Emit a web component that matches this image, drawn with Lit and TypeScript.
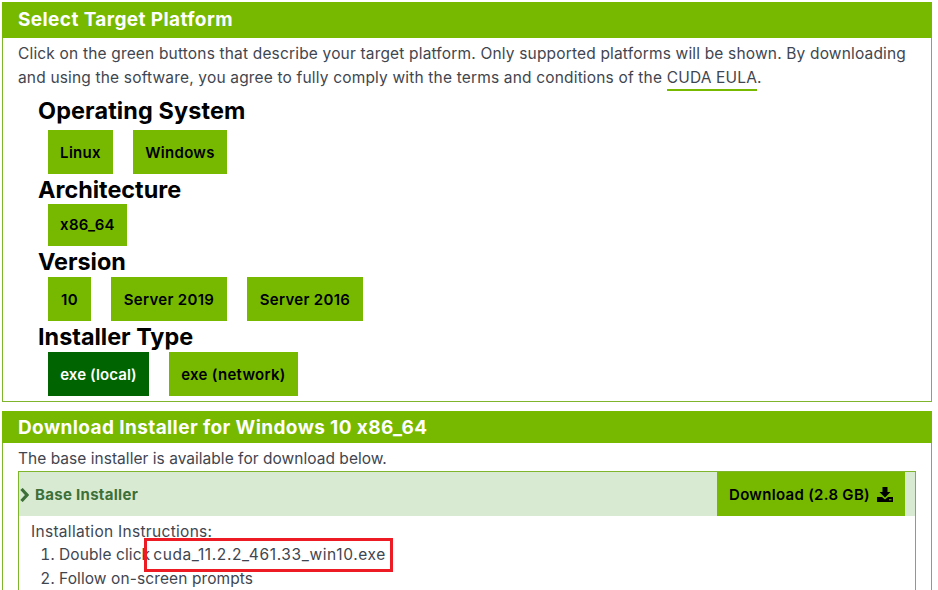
import { LitElement, html, css } from 'lit';
import { customElement } from 'lit/decorators.js';

const groups = [
  { title: 'Operating System', cls: 'os', active: '', options: [{ label: 'Linux', w: 65 }, { label: 'Windows', w: 94 }] },
  { title: 'Architecture', cls: 'arch', active: '', options: [{ label: 'x86_64', w: 79 }] },
  { title: 'Version', cls: 'ver', active: '', options: [{ label: '10', w: 43 }, { label: 'Server 2019', w: 116 }, { label: 'Server 2016', w: 116 }] },
  { title: 'Installer Type', cls: 'inst', active: 'exe (local)', options: [{ label: 'exe (local)', w: 101 }, { label: 'exe (network)', w: 129 }] },
];

@customElement('app-root')
export class AppRoot extends LitElement {
  static styles = css`
    :host {
      display: block;
      width: 938px;
      height: 590px;
      overflow: hidden;
      box-sizing: border-box;
      padding: 2px 6px 0 2px;
      background: #fff;
      font-family: Inter, sans-serif;
      font-size: 15.5px;
      line-height: 24px;
      color: #3f4650;
      font-variant-ligatures: no-contextual;
      font-feature-settings: "calt" 0;
    }
    .panel {
      border: 1px solid #7fb52c;
      border-top: none;
      margin-bottom: 9px;
    }
    .panel-title {
      margin: 0 -1px;
      padding: 0 16px;
      height: 36px;
      display: flex;
      align-items: center;
      background: #76b900;
      color: #fff;
      font-size: 19px;
      letter-spacing: 0.4px;
      font-weight: 700;
    }
    .second .panel-title { height: 32px; padding-top: 1px; box-sizing: border-box; }
    .panel-body { padding: 4px 15px 0; }
    .panel-body p { margin: 0; }
    .intro { letter-spacing: 0.17px; }
    .base { letter-spacing: 0.03px; }
    a { color: inherit; text-decoration: none; border-bottom: 2px solid #76b900; padding-bottom: 2px; }
    .groups { padding: 5px 0 5px 20px; }
    h3 {
      margin: 0;
      font-size: 23.400px;
      line-height: 31px;
      font-weight: 700;
      color: #000;
    }
    h3:first-child { margin-bottom: 4px; letter-spacing: 0.13px; }
    .opts { display: flex; gap: 20px; padding-left: 10px; }
    .arch { margin-top: -1px; }
    .opt {
      height: 44px;
      box-sizing: border-box;
      padding-top: 1px;
      display: flex;
      align-items: center;
      justify-content: center;
      background: #76b900;
      color: #000;
      font-size: 15px;
      letter-spacing: 0.3px;
      font-weight: 600;
    }
    .opt.on { background: #006400; color: #fff; letter-spacing: 0.1px; }
    .arch .opt { height: 42px; padding-top: 0; }
    .box {
      border: 1px solid #7fb52c;
      height: 200px;
    }
    .box-head {
      display: flex;
      justify-content: space-between;
      align-items: stretch;
      height: 44px;
      padding-right: 10px;
      background: #d9ead3;
    }
    .box-title {
      display: flex;
      align-items: center;
      gap: 6px;
      padding: 1px 0 0 1px;
      color: #3c7038;
      font-size: 15px;
      letter-spacing: 0.3px;
      font-weight: 700;
    }
    .box-title svg { width: 9px; height: 14px; }
    .dl {
      width: 188px;
      box-sizing: border-box;
      padding: 1px 0 0 12px;
      display: flex;
      align-items: center;
      gap: 7px;
      background: #76b900;
      color: #000;
      font-size: 15px;
      letter-spacing: 0.3px;
      font-weight: 600;
    }
    .dl svg { width: 16px; height: 15px; }
    .steps { padding: 4px 12px 0; letter-spacing: 0.3px; }
    ol { margin: -1px 0 0; padding: 0 0 0 28px; letter-spacing: 0.1px; }
    .file { position: relative; margin-left: -1.500px; letter-spacing: 0.62px; }
    .mark {
      position: absolute;
      left: -9px;
      top: -7px;
      width: 249px;
      height: 34px;
      box-sizing: border-box;
      border: 3px solid #ed1c24;
    }
  `;

  render() {
    return html`
      <section class="panel">
        <div class="panel-title">Select Target Platform</div>
        <div class="panel-body">
          <p class="intro">Click on the green buttons that describe your target platform. Only supported platforms will be shown. By downloading and using the software, you agree to fully comply with the terms and conditions of the <a>CUDA EULA</a>.</p>
          <div class="groups">
            ${groups.map(g => html`
              <h3>${g.title}</h3>
              <div class="opts ${g.cls}">
                ${g.options.map(o => html`<div class="opt ${o.label === g.active ? 'on' : ''}" style="width:${o.w}px">${o.label}</div>`)}
              </div>
            `)}
          </div>
        </div>
      </section>
      <section class="panel second">
        <div class="panel-title">Download Installer for Windows 10 x86_64</div>
        <div class="panel-body">
          <p class="base">The base installer is available for download below.</p>
          <div class="box">
            <div class="box-head">
              <div class="box-title">
                <svg viewBox="0 0 9 14"><path d="M1.500 1 7 7 1.500 13" fill="none" stroke="#3c7038" stroke-width="3.200"/></svg>
                Base Installer
              </div>
              <div class="dl">
                Download (2.8 GB)
                <svg viewBox="0 0 16 15"><path d="M5.500 0h5v5H13.500L8 10.500 2.500 5H5.500z" fill="#000"/><path fill-rule="evenodd" d="M0 10h5l3 2.500 3-2.500h5v5H0zM12 12.200h2.500v1H12z" fill="#000"/></svg>
              </div>
            </div>
            <div class="steps">
              Installation Instructions:
              <ol>
                <li>Double click <span class="file">cuda_11.2.2_461.33_win10.exe<span class="mark"></span></span></li>
                <li>Follow on-screen prompts</li>
              </ol>
            </div>
          </div>
        </div>
      </section>
    `;
  }
}
